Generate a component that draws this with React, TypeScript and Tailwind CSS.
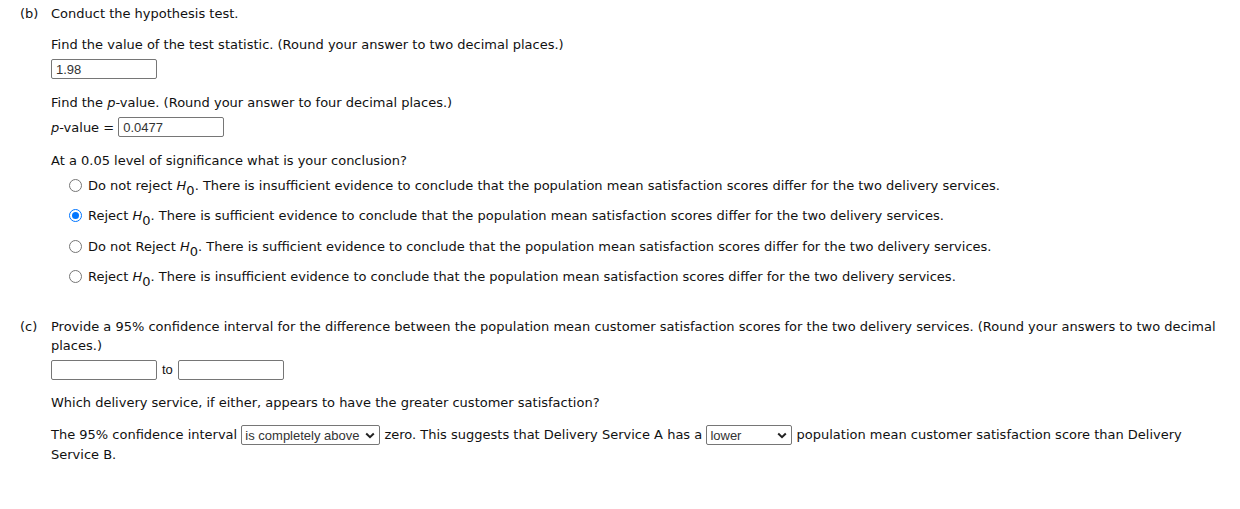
import React from "react";

const font = { fontFamily: '"DejaVu Sans", Verdana, sans-serif' };
const arial = { fontFamily: '"Liberation Sans", Arial, sans-serif' };

function H0() {
  return (
    <>
      <i>H</i>
      <sub className="relative top-[5px] text-[13px] leading-none">0</sub>
    </>
  );
}

function Radio({ checked }: { checked?: boolean }) {
  if (checked) {
    return (
      <span className="flex h-[13px] w-[13px] shrink-0 items-center justify-center rounded-full border-[1.5px] border-[#0075ff] bg-white">
        <span className="h-[7px] w-[7px] rounded-full bg-[#0075ff]" />
      </span>
    );
  }
  return <span className="h-[13px] w-[13px] shrink-0 rounded-full border border-[#767676] bg-white" />;
}

function Box({ value, w = "w-[106px]" }: { value?: string; w?: string }) {
  return (
    <span
      className={`inline-flex h-[20px] ${w} items-center rounded-[2px] border border-[#767676] bg-white px-[4px] align-middle text-[13px] text-[#333]`}
      style={arial}
    >
      {value}
    </span>
  );
}

function Select({ value, w }: { value: string; w: string }) {
  return (
    <span
      className={`inline-flex h-[20px] ${w} items-center justify-between rounded-[2px] border border-[#767676] bg-white pl-[3px] pr-[4px] align-middle text-[13px] text-[#333]`}
      style={arial}
    >
      <span>{value}</span>
      <svg width="10" height="7" viewBox="0 0 10 7" fill="none">
        <path d="M1.2 1.5 L5 5.2 L8.8 1.5" stroke="#222" strokeWidth="2" />
      </svg>
    </span>
  );
}

const options = [
  { pre: "Do not reject ", post: ". There is insufficient evidence to conclude that the population mean satisfaction scores differ for the two delivery services." },
  { pre: "Reject ", post: ". There is sufficient evidence to conclude that the population mean satisfaction scores differ for the two delivery services.", checked: true },
  { pre: "Do not Reject ", post: ". There is sufficient evidence to conclude that the population mean satisfaction scores differ for the two delivery services." },
  { pre: "Reject ", post: ". There is insufficient evidence to conclude that the population mean satisfaction scores differ for the two delivery services." },
];

export default function App() {
  return (
    <div className="min-h-[509px] w-[1240px] bg-white pl-[20px] pt-[4px] text-[13px] leading-[19px] text-[#111]" style={font}>
      <div className="flex">
        <div className="w-[31px] shrink-0">(b)</div>
        <div className="flex flex-col">
          <div>Conduct the hypothesis test.</div>
          <div className="mt-[12px]">Find the value of the test statistic. (Round your answer to two decimal places.)</div>
          <div className="mt-[5px] flex">
            <Box value="1.98" />
          </div>
          <div className="mt-[14px]">
            Find the <i>p</i>-value. (Round your answer to four decimal places.)
          </div>
          <div className="mt-[5px] flex items-center gap-[4px]">
            <span>
              <i>p</i>-value =
            </span>
            <Box value="0.0477" />
          </div>
          <div className="mt-[14px]">At a 0.05 level of significance what is your conclusion?</div>
          <div className="mt-[5px] flex flex-col gap-[10.5px] pl-[18px]">
            {options.map((o, i) => (
              <div key={i} className="flex h-[20px] items-center gap-[6px]">
                <Radio checked={o.checked} />
                <span className="whitespace-nowrap">
                  {o.pre}
                  <H0 />
                  {o.post}
                </span>
              </div>
            ))}
          </div>
        </div>
      </div>

      <div className="mt-[30px] flex">
        <div className="w-[31px] shrink-0">(c)</div>
        <div className="flex flex-col">
          <div className="whitespace-nowrap">
            Provide a 95% confidence interval for the difference between the population mean customer satisfaction scores for the two delivery services. (Round your answers to two decimal
            <br />
            places.)
          </div>
          <div className="mt-[5px] flex items-center">
            <Box />
            <span className="mx-[5px] text-[13px]" style={arial}>
              to
            </span>
            <Box />
          </div>
          <div className="mt-[13px]">Which delivery service, if either, appears to have the greater customer satisfaction?</div>
          <div className="mt-[13px] whitespace-nowrap">
            The 95% confidence interval <Select value="is completely above" w="w-[139px]" /> zero. This suggests that Delivery Service A has a{" "}
            <Select value="lower" w="w-[86px]" /> population mean customer satisfaction score than Delivery
            <br />
            Service B.
          </div>
        </div>
      </div>
    </div>
  );
}
